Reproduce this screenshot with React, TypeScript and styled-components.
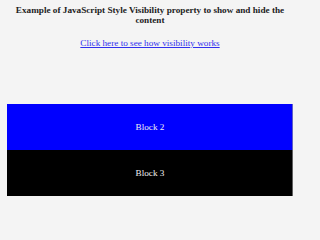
import React from "react";
import styled, { createGlobalStyle } from "styled-components";

const GlobalStyle = createGlobalStyle`
  html, body {
    margin: 0;
    background: #f4f4f4;
  }
  body {
    font-family: "Liberation Serif", "Times New Roman", serif;
  }
`;

const Page = styled.div`
  width: 300px;
  box-sizing: border-box;
  padding: 5px 7px 0;
  display: flex;
  flex-direction: column;
  align-items: center;
`;

const Title = styled.h1`
  margin: 0;
  padding: 0 4px;
  font-size: 9.2px;
  line-height: 10px;
  font-weight: bold;
  text-align: center;
  color: #222;
`;

const ToggleLink = styled.a`
  margin-top: 13px;
  font-size: 9.2px;
  line-height: 10px;
  color: #3030ee;
  text-decoration: underline;
  cursor: pointer;
`;

const Blocks = styled.div`
  margin-top: 10px;
  align-self: stretch;
  display: flex;
  flex-direction: column;
`;

const Block = styled.div<{ $bg: string; $hidden?: boolean }>`
  height: 46px;
  display: flex;
  align-items: center;
  justify-content: center;
  background: ${(p) => p.$bg};
  color: #f0f0f0;
  font-size: 9.2px;
  visibility: ${(p) => (p.$hidden ? "hidden" : "visible")};
  box-shadow: inset -1px 0 0 rgba(160, 160, 160, 0.6);
`;

export default function App() {
  const [shown, setShown] = React.useState(false);
  return (
    <>
      <GlobalStyle />
      <Page>
        <Title>
          Example of JavaScript Style Visibility property to show and hide the
          content
        </Title>
        <ToggleLink onClick={() => setShown(!shown)}>
          Click here to see how visibility works
        </ToggleLink>
        <Blocks>
          <Block $bg="#ff0000" $hidden={!shown}>
            Block 1
          </Block>
          <Block $bg="#0000ff">Block 2</Block>
          <Block $bg="#000000">Block 3</Block>
        </Blocks>
      </Page>
    </>
  );
}
